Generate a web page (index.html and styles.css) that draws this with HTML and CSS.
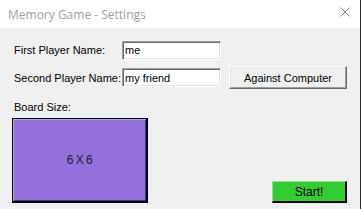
FILE: index.html
```html
<html>

<head>
  <meta name="description" content="Memory Game - Settings" />
  <link rel="stylesheet" href="styles.css">
</head>

<body>
  <div class="window">
    <div class="title">
      <div class="title-text">Memory Game - Settings</div>
      <svg class="title-close" width="10" height="10" viewBox="0 0 10 10">
        <path d="M0.5 0.5 L9.5 9.5 M9.5 0.5 L0.5 9.5" stroke="#8a8a8a" stroke-width="1" fill="none" />
      </svg>
    </div>

    <div class="content">
      <div class="row row-first">
        <div class="lbl">First Player Name:</div>
        <input class="txt" type="text" value="me" />
      </div>
      <div class="row row-second">
        <div class="lbl">Second Player Name:</div>
        <input class="txt" type="text" value="my friend" />
        <button class="btn-computer">Against Computer</button>
      </div>

      <div class="lbl lbl-board">Board Size:</div>
      <div class="board-row">
        <button class="btn-board">6 X 6</button>
        <button class="btn-start">Start!</button>
      </div>
    </div>
  </div>
</body>

</html>
```

FILE: styles.css
```css
body {
  margin: 0;
  font-family: "Liberation Sans", Arial, sans-serif;
  font-size: 11px;
}

.window {
  width: 360px;
  height: 209px;
  background-color: #f0f0f0;
  border-right: 1px solid #2b2b2b;
}

.title {
  background-color: white;
  height: 28px;
  display: flex;
  align-items: center;
  justify-content: space-between;
  padding-left: 8px;
  padding-right: 10px;
}

.title-text {
  font-family: "Open Sans", "Noto Sans", sans-serif;
  font-size: 12px;
  color: #a0a0a0;
}

.title-close {
  margin-bottom: 4px;
}

.content {
  padding-left: 12px;
}

.row {
  display: flex;
  align-items: center;
}

.row-first {
  margin-top: 12px;
  height: 20px;
}

.row-second {
  margin-top: 6px;
  height: 23px;
}

.lbl {
  padding-left: 2px;
  color: black;
}

.row .lbl {
  width: 108px;
}

.txt {
  width: 99px;
  height: 19px;
  box-sizing: border-box;
  margin: 0;
  padding: 0 0 0 2px;
  font-family: "Liberation Sans", Arial, sans-serif;
  font-size: 11px;
  color: black;
  background-color: white;
  border-style: solid;
  border-width: 1px;
  border-color: #a0a0a0 #ffffff #ffffff #a0a0a0;
  box-shadow: inset 1px 1px 0 #696969, inset -1px -1px 0 #e3e3e3;
  outline: none;
}

.btn-computer {
  margin: 0 0 0 8px;
  width: 118px;
  height: 23px;
  padding: 0;
  font-family: "Liberation Sans", Arial, sans-serif;
  font-size: 11px;
  color: black;
  background-color: #f0f0f0;
  border-style: solid;
  border-width: 1px;
  border-color: #ffffff #696969 #696969 #ffffff;
  box-shadow: inset -1px -1px 0 #a0a0a0, inset 1px 1px 0 #e3e3e3;
}

.lbl-board {
  margin-top: 12px;
  line-height: 13px;
}

.board-row {
  margin-top: 4px;
  display: flex;
  justify-content: space-between;
  align-items: flex-end;
  padding-right: 13px;
}

.btn-board {
  margin: 0;
  width: 136px;
  height: 85px;
  padding: 0;
  font-family: "Liberation Sans", Arial, sans-serif;
  font-size: 12px;
  letter-spacing: -0.5px;
  color: #222222;
  background-color: #9370db;
  border-style: solid;
  border-color: black;
  border-width: 1px 2px 2px 1px;
  box-shadow: inset 1px 1px 0 #b9a3ee, inset -1px -1px 0 #4b2f8a;
}

.btn-start {
  margin: 0;
  width: 75px;
  height: 22px;
  padding: 0;
  font-family: "Liberation Sans", Arial, sans-serif;
  font-size: 12px;
  color: black;
  background-color: #32cd32;
  border-style: solid;
  border-color: #8fe08f black black #8fe08f;
  border-width: 1px 2px 2px 1px;
}
```
